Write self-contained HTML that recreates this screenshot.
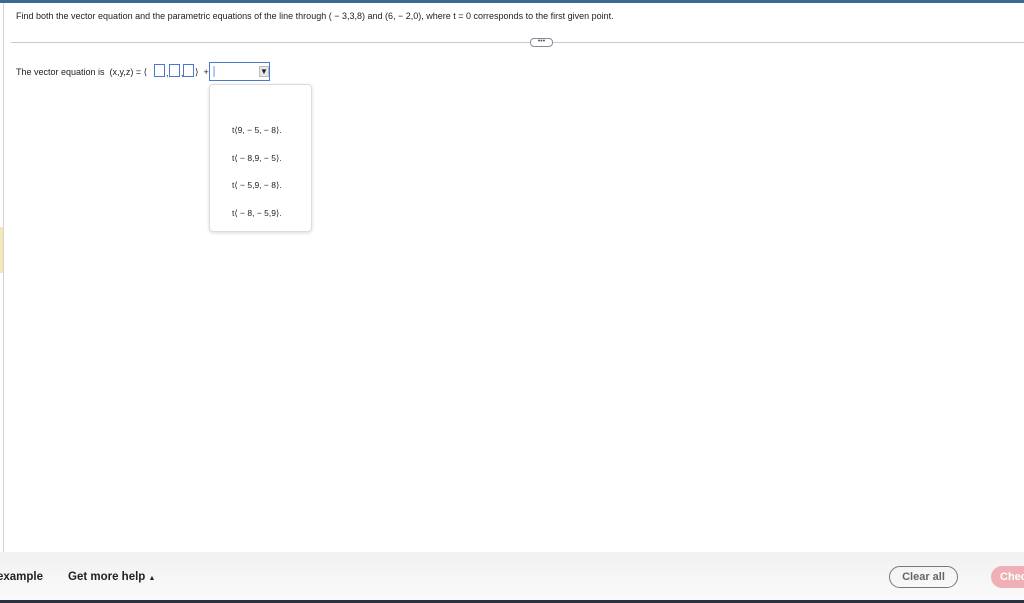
<!DOCTYPE html>
<html><head><style>
*{margin:0;padding:0;box-sizing:border-box}
body{width:1024px;height:603px;overflow:hidden;background:#fff;font-family:"Liberation Sans",Arial,sans-serif;position:relative;color:#222}
.abs{position:absolute}
</style></head><body>
<div class="abs" style="left:0;top:0;width:1024px;height:3px;background:#3a6a8e"></div>
<div class="abs" style="left:3px;top:3px;width:1px;height:549px;background:#d4d4d8"></div>
<div class="abs" style="left:0;top:227px;width:3px;height:46px;background:#f7e6b5"></div>
<div class="abs" style="left:16px;top:11px;font-size:9px;white-space:nowrap">Find both the vector equation and the parametric equations of the line through ( − 3,3,8) and (6, − 2,0), where t = 0 corresponds to the first given point.</div>
<div class="abs" style="left:11px;top:42px;width:1013px;height:1px;background:#c8c8d0"></div>
<div class="abs" style="left:530px;top:38px;width:23px;height:9px;border:1px solid #8a8a96;border-radius:4px;background:#fff;font-size:7px;line-height:5px;text-align:center;color:#555">•••</div>
<div class="abs" style="left:16px;top:67px;font-size:9px;white-space:nowrap">The vector equation is &nbsp;(x,y,z) = ⟨</div>
<div class="abs" style="left:154px;top:64px;width:11px;height:13px;border:1px solid #4a78d0"></div>
<div class="abs" style="left:166px;top:68px;font-size:9px">,</div>
<div class="abs" style="left:169px;top:64px;width:11px;height:13px;border:1px solid #4a78d0"></div>
<div class="abs" style="left:181px;top:68px;font-size:9px">,</div>
<div class="abs" style="left:183px;top:64px;width:11px;height:13px;border:1px solid #4a78d0"></div>
<div class="abs" style="left:195px;top:67px;font-size:9px">⟩ &nbsp;+</div>
<div class="abs" style="left:209px;top:62px;width:61px;height:19px;border:1px solid #4a78d0;background:#fff"></div>
<div class="abs" style="left:213px;top:66px;width:2px;height:11px;background:#b5cdf0"></div>
<div class="abs" style="left:259px;top:66px;width:10px;height:11px;background:#e8e8e8;border:1px solid #bbb;font-size:8px;line-height:9px;text-align:center">▼</div>
<div class="abs" style="left:209px;top:84px;width:103px;height:148px;border:1px solid #ddd;border-radius:4px;background:#fff;box-shadow:0 1px 3px rgba(0,0,0,.15)"></div>
<div class="abs" style="left:232px;top:117px;font-size:8.5px;line-height:27.5px;white-space:nowrap">t⟨9, − 5, − 8⟩.<br>t⟨ − 8,9, − 5⟩.<br>t⟨ − 5,9, − 8⟩.<br>t⟨ − 8, − 5,9⟩.</div>
<div class="abs" style="left:0;top:552px;width:1024px;height:48px;background:linear-gradient(#f1f1f1,#fafafa)"></div>
<div class="abs" style="left:0;top:600px;width:1024px;height:3px;background:#2a3140"></div>
<div class="abs" style="left:-3px;top:571px;font-size:11.5px;font-weight:bold">example</div>
<div class="abs" style="left:68px;top:571px;font-size:11.5px;font-weight:bold">Get more help <span style="font-size:7px">▲</span></div>
<div class="abs" style="left:889px;top:566px;width:69px;height:22px;border:1px solid #777;border-radius:11px;font-size:11px;font-weight:bold;color:#666;text-align:center;line-height:20px">Clear all</div>
<div class="abs" style="left:991px;top:566px;width:60px;height:22px;border-radius:11px;background:#eeb0b6;font-size:11px;font-weight:bold;color:#fff;line-height:22px;padding-left:9px">Check</div>
</body></html>
